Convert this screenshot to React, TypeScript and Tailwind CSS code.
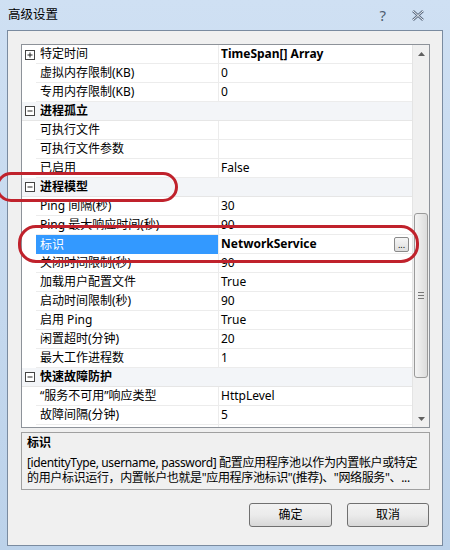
type Row =
  | { kind: "cat"; label: string; open: boolean }
  | { kind: "item"; label: string; value?: string; bold?: boolean; selected?: boolean; button?: boolean };

const rows: Row[] = [
  { kind: "item", label: "特定时间", value: "TimeSpan[] Array", bold: true },
  { kind: "item", label: "虚拟内存限制(KB)", value: "0" },
  { kind: "item", label: "专用内存限制(KB)", value: "0" },
  { kind: "cat", label: "进程孤立", open: true },
  { kind: "item", label: "可执行文件", value: "" },
  { kind: "item", label: "可执行文件参数", value: "" },
  { kind: "item", label: "已启用", value: "False" },
  { kind: "cat", label: "进程模型", open: true },
  { kind: "item", label: "Ping 间隔(秒)", value: "30" },
  { kind: "item", label: "Ping 最大响应时间(秒)", value: "90" },
  { kind: "item", label: "标识", value: "NetworkService", bold: true, selected: true, button: true },
  { kind: "item", label: "关闭时间限制(秒)", value: "90" },
  { kind: "item", label: "加载用户配置文件", value: "True" },
  { kind: "item", label: "启动时间限制(秒)", value: "90" },
  { kind: "item", label: "启用 Ping", value: "True" },
  { kind: "item", label: "闲置超时(分钟)", value: "20" },
  { kind: "item", label: "最大工作进程数", value: "1" },
  { kind: "cat", label: "快速故障防护", open: true },
  { kind: "item", label: "\u201C服务不可用\u201D响应类型", value: "HttpLevel" },
  { kind: "item", label: "故障间隔(分钟)", value: "5" },
  { kind: "item", label: "故障最大次数", value: "5" },
];

const font = { fontFamily: '"Noto Sans", "Noto Sans CJK SC", sans-serif' };

function Expander({ open }: { open: boolean }) {
  return (
    <svg width="10" height="10" viewBox="0 0 10 10" className="shrink-0">
      <rect x="0.5" y="0.5" width="9" height="9" fill="white" stroke="#444" />
      <line x1="2.5" y1="5" x2="7.5" y2="5" stroke="#222" />
      {!open && <line x1="5" y1="2.5" x2="5" y2="7.5" stroke="#222" />}
    </svg>
  );
}

function GridRow({ row, first }: { row: Row; first?: boolean }) {
  if (row.kind === "cat") {
    return (
      <div className="flex h-[19px] shrink-0 items-center border-b border-[#e6e6e6] bg-[#f3f5f8]">
        <div className="flex w-[14px] justify-center pl-[2px]">
          <Expander open={row.open} />
        </div>
        <span className="pl-[4px] text-[12px] font-bold text-black">{row.label}</span>
      </div>
    );
  }
  return (
    <div className="flex h-[19px] shrink-0 items-stretch">
      <div className="flex w-[14px] items-center justify-center bg-white pl-[2px]">
        {first && <Expander open={false} />}
      </div>
      <div
        className={
          row.selected
            ? "flex w-[182px] items-center bg-[#3399ff] pl-[4px] text-[12px] text-white"
            : "flex w-[182px] items-center border-b border-[#ececec] pl-[4px] text-[12px] text-black"
        }
      >
        <span className="whitespace-nowrap">{row.label}</span>
      </div>
      <div className="w-px bg-[#ececec]" />
      <div className="flex flex-1 items-center justify-between border-b border-[#ececec] pl-[2px] pr-[3px]">
        <span className={row.bold ? "text-[12px] font-bold text-black" : "text-[12px] text-black"}>{row.value}</span>
        {row.button && (
          <div className="flex h-[15px] w-[15px] items-end justify-center rounded-[2px] border border-[#8a8a8a] bg-gradient-to-b from-[#f6f6f6] to-[#dedede] pb-[2px] text-[9px] leading-none text-black">
            ...
          </div>
        )}
      </div>
    </div>
  );
}

function Scrollbar() {
  return (
    <div className="flex w-[17px] flex-col border-l border-[#e4e4e4] bg-[#f0f0f0]">
      <div className="flex h-[17px] items-center justify-center">
        <svg width="7" height="4" viewBox="0 0 7 4">
          <path d="M0 4 L3.5 0 L7 4 Z" fill="#606060" />
        </svg>
      </div>
      <div className="h-[151px]" />
      <div className="mx-[1px] flex h-[165px] flex-col items-center justify-center gap-[2px] rounded-[3px] border border-[#9a9a9a] bg-gradient-to-r from-[#f4f4f4] to-[#dcdcdc]">
        <div className="h-px w-[6px] bg-[#777]" />
        <div className="h-px w-[6px] bg-[#777]" />
        <div className="h-px w-[6px] bg-[#777]" />
      </div>
      <div className="flex-1" />
      <div className="flex h-[17px] items-center justify-center">
        <svg width="7" height="4" viewBox="0 0 7 4">
          <path d="M0 0 L3.5 4 L7 0 Z" fill="#606060" />
        </svg>
      </div>
    </div>
  );
}

export default function App() {
  return (
    <div
      className="relative h-[550px] w-[450px] overflow-hidden bg-gradient-to-b from-[#cfe0f3] to-[#bcd2ea]"
      style={font}
    >
      <div className="flex h-[30px] items-center justify-between pl-[8px] pr-[26px]">
        <span className="pt-[1px] text-[12.5px] text-black">高级设置</span>
        <div className="flex items-center gap-[26px] text-[#4f5d70]">
          <span className="text-[15px] leading-none">?</span>
          <svg width="12" height="11" viewBox="0 0 12 11">
            <path d="M1 1 L11 10 M11 1 L1 10" stroke="#5c6b80" strokeWidth="2.5" />
            <path d="M1 1 L11 10 M11 1 L1 10" stroke="#eef4fb" strokeWidth="1" />
          </svg>
        </div>
      </div>

      <div className="mx-[7px] flex h-[516px] flex-col border border-[#7a8ba0] bg-[#f0f0f0] pl-[13px] pr-[12px] pt-[13px]">
        <div className="flex h-[384px] border border-[#8d9299] bg-white">
          <div className="flex flex-1 flex-col overflow-hidden">
            {rows.map((r, i) => (
              <GridRow key={i} row={r} first={i === 0} />
            ))}
          </div>
          <Scrollbar />
        </div>

        <div className="mt-[4px] h-[58px] overflow-hidden border border-[#a0a0a0] bg-[#f0f0f0] px-[5px] pt-[2px] text-black">
          <div className="mb-[4px] text-[12px] font-bold leading-[16px]">标识</div>
          <div className="whitespace-nowrap text-[12px] leading-[15px] tracking-[-0.35px]">
            [identityType, username, password] 配置应用程序池以作为内置帐户或特定
          </div>
          <div className="whitespace-nowrap text-[12px] leading-[15px] tracking-[-0.35px]">
            的用户标识运行，内置帐户也就是"应用程序池标识"(推荐)、"网络服务"、...
          </div>
        </div>

        <div className="mt-[13px] flex justify-end gap-[15px] pr-[1px]">
          <button className="h-[24px] w-[83px] rounded-[3px] border border-[#707070] bg-gradient-to-b from-[#f2f2f2] via-[#ebebeb] to-[#d8d8d8] text-[12px] text-black">
            确定
          </button>
          <button className="h-[24px] w-[82px] rounded-[3px] border border-[#707070] bg-gradient-to-b from-[#f2f2f2] via-[#ebebeb] to-[#d8d8d8] text-[12px] text-black">
            取消
          </button>
        </div>
      </div>

      <div className="pointer-events-none absolute left-[-4px] top-[172px] h-[30px] w-[182px] rounded-[15px] border-[3px] border-[#c0222c]" />
      <div className="pointer-events-none absolute left-[18px] top-[225px] h-[38px] w-[401px] rounded-[18px] border-[3px] border-[#c0222c]" />
    </div>
  );
}
